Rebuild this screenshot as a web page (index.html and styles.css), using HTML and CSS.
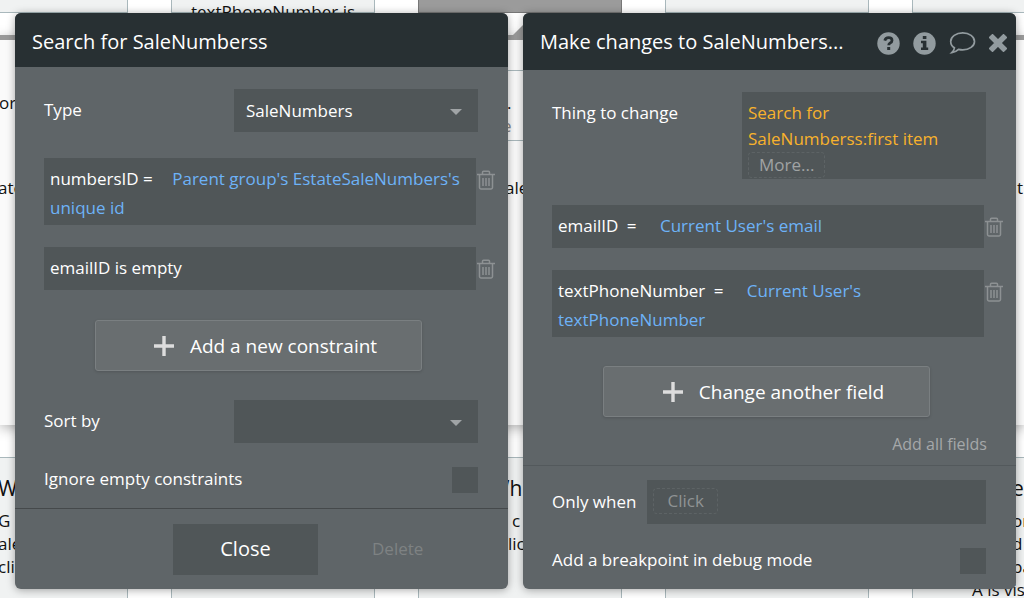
FILE: index.html
```html
<!DOCTYPE html>
<html lang="en">
<head>
  <meta charset="UTF-8" />
  <meta name="viewport" content="width=device-width, initial-scale=1.0" />
  <title>Workflow editor</title>
  <link rel="stylesheet" href="styles.css">
</head>
<body>
  <svg class="sprite" aria-hidden="true">
    <symbol id="trash" viewBox="0 0 18 20">
      <path d="M0 4.500h18M5.500 4V2.200q0-1 1-1h5q1 0 1 1V4M2.500 5v12.600q0 1.400 1.400 1.400h10.200q1.400 0 1.400-1.400V5M6 8v8M9 8v8M12 8v8" fill="none" stroke="currentColor" stroke-width="1.500" />
    </symbol>
    <symbol id="plus" viewBox="0 0 20 20">
      <path d="M10 0v20M0 10h20" stroke="currentColor" stroke-width="3.400" />
    </symbol>
  </svg>

  <div class="canvas">
    <div class="cards cards-top">
      <div class="card"></div>
      <div class="card"><p>textPhoneNumber is</p></div>
      <div class="card selected"></div>
      <div class="card"></div>
      <div class="card"></div>
    </div>
    <div class="workflow">
      <div class="pointer"></div>
      <div class="step"></div>
      <span class="note note-or">or</span>
      <span class="note note-dot">.</span>
      <span class="note note-e">e</span>
      <span class="note note-ate">ate</span>
      <span class="note note-sale">ale</span>
      <span class="note note-t">t</span>
    </div>
    <div class="cards cards-bottom">
      <div class="card first"><h2>W</h2><p>G</p><p>ale</p><p>cli</p></div>
      <div class="card"></div>
      <div class="card middle"><h2>Wh</h2><p>c</p><p>lic</p></div>
      <div class="card"></div>
      <div class="card last"><h2>e</h2><p>or</p><p>d</p><p>pa</p><p class="wide">A is vis</p></div>
    </div>
  </div>

  <main class="panels">
    <section class="panel">
      <header class="panel-header">
        <h1>Search for SaleNumberss</h1>
      </header>
      <div class="panel-body">
        <div class="row">
          <label for="type">Type</label>
          <span class="dropdown">
            <select id="type"><option>SaleNumbers</option></select>
          </span>
        </div>
        <div class="item">
          <div class="composer">numbersID = <span class="value">Parent group's EstateSaleNumbers's unique id</span></div>
          <button class="trash" aria-label="Delete constraint"><svg><use href="#trash" /></svg></button>
        </div>
        <div class="item">
          <div class="composer">emailID is empty</div>
          <button class="trash" aria-label="Delete constraint"><svg><use href="#trash" /></svg></button>
        </div>
        <button class="add-btn"><svg><use href="#plus" /></svg>Add a new constraint</button>
        <div class="row">
          <label for="sort">Sort by</label>
          <span class="dropdown">
            <select id="sort"><option></option></select>
          </span>
        </div>
        <div class="row check-row">
          <label for="ignore">Ignore empty constraints</label>
          <input type="checkbox" id="ignore">
        </div>
      </div>
      <footer class="panel-footer">
        <button class="close-btn">Close</button>
        <button class="delete-btn">Delete</button>
      </footer>
    </section>

    <section class="panel">
      <header class="panel-header action-header">
        <h1>Make changes to SaleNumbers...</h1>
        <div class="icons">
          <button aria-label="Help">
            <svg width="23" height="23" viewBox="0 0 23 23">
              <circle cx="11.5" cy="11.5" r="11.2" fill="currentColor" />
              <path d="M7.800 8.600Q8.500 5.600 11.600 5.600q3.400 0 3.400 2.800 0 1.700-1.900 2.600-1.400.7-1.400 2.200" fill="none" stroke="#283033" stroke-width="2.800" />
              <path d="M10.200 14.900h3v3h-3z" fill="#283033" />
            </svg>
          </button>
          <button aria-label="Info">
            <svg width="23" height="23" viewBox="0 0 23 23">
              <circle cx="11.5" cy="11.5" r="11.2" fill="currentColor" />
              <path d="M9.800 4h3.600v3H9.800zM8 8.800h5.400v6.800h1.800V18H8v-2.400h1.800v-4.400H8z" fill="#283033" />
            </svg>
          </button>
          <button aria-label="Comments">
            <svg width="27" height="24" viewBox="0 0 27 24">
              <path d="M13.700 1.900c6.600 0 11.800 3.800 11.800 8.500s-5.200 8.500-11.800 8.500c-1.500 0-2.900-.2-4.200-.5-1.800 1.800-4 3-6.700 3.300 1.500-1.400 2.400-2.800 2.600-4.900C3 15.200 1.700 13 1.700 10.400c0-4.700 5.400-8.500 12-8.500z" fill="none" stroke="currentColor" stroke-width="1.700" />
            </svg>
          </button>
          <button aria-label="Close">
            <svg width="18" height="18" viewBox="0 0 18 18">
              <path d="M3.500 3.500l11 11M14.500 3.500l-11 11" stroke="currentColor" stroke-width="5.500" stroke-linecap="square" />
            </svg>
          </button>
        </div>
      </header>
      <div class="panel-body">
        <div class="row thing-row">
          <span class="label">Thing to change</span>
          <div class="thing">
            Search for SaleNumberss:first item
            <button class="more">More...</button>
          </div>
        </div>
        <div class="item">
          <div class="composer">emailID <span class="equals">=</span> <span class="value">Current User's email</span></div>
          <button class="trash" aria-label="Delete field"><svg><use href="#trash" /></svg></button>
        </div>
        <div class="item">
          <div class="composer">textPhoneNumber <span class="equals">=</span> <span class="value">Current User's textPhoneNumber</span></div>
          <button class="trash" aria-label="Delete field"><svg><use href="#trash" /></svg></button>
        </div>
        <button class="add-btn change-btn"><svg><use href="#plus" /></svg>Change another field</button>
        <a class="all-fields" href="#">Add all fields</a>
      </div>
      <div class="conditions">
        <div class="row">
          <span class="label">Only when</span>
          <div class="condition"><button class="click">Click</button></div>
        </div>
        <div class="row check-row">
          <label for="breakpoint">Add a breakpoint in debug mode</label>
          <input type="checkbox" id="breakpoint">
        </div>
      </div>
    </section>
  </main>
</body>
</html>
```
FILE: styles.css
```css
* {
  box-sizing: border-box;
}

body {
  margin: 0;
  min-height: 100vh;
  position: relative;
  overflow: hidden;
  background: #fff;
  color: #fff;
  font-family: "Open Sans", "Noto Sans", sans-serif;
  font-size: 17px;
}

h1, h2, p {
  margin: 0;
  font-weight: normal;
}

button {
  padding: 0;
  border: none;
  background: none;
  color: inherit;
  font: inherit;
  cursor: pointer;
}

.sprite {
  display: none;
}

/* workflow canvas behind the panels */
.canvas {
  position: absolute;
  inset: 0;
  display: flex;
  flex-direction: column;
  overflow: hidden;
  color: #111;
  line-height: 23px;
}

.cards {
  display: flex;
  gap: 43px;
  margin-left: -76px;
}

.card {
  flex: none;
  width: 204px;
  border: 1px solid #a9b8bc;
  background: #f0f2f2;
  white-space: nowrap;
}

.cards-top {
  height: 13px;
}

.cards-top .card {
  border-top: none;
  text-align: center;
}

.card.selected {
  background: #9b9b9b;
  border-color: #777;
}

.workflow {
  position: relative;
  height: 393px;
  margin-top: 22px;
  border-top: 5px solid #999;
  background: #fafafa;
  box-shadow: 0 3px 12px rgba(0, 0, 0, 0.3);
}

.pointer {
  position: absolute;
  left: 512px;
  top: -18px;
  border: 14px solid transparent;
  border-top: none;
  border-bottom-color: #999;
}

.step {
  position: absolute;
  left: 419px;
  top: 30px;
  width: 204px;
  height: 71px;
  border: 1px solid #a9b8bc;
}

.note {
  position: absolute;
}

.note-or { left: -1px; top: 51px; }
.note-dot { left: 507px; top: 51px; }
.note-e { left: 502px; top: 74px; color: #888; }
.note-ate { left: -2px; top: 136px; }
.note-sale { left: 505px; top: 136px; }
.note-t { left: 1017px; top: 136px; }

.cards-bottom {
  flex: 1;
  margin-top: 32px;
  margin-bottom: -4px;
}

.cards-bottom .card {
  padding-top: 14px;
}

.cards-bottom h2 {
  font-size: 21px;
  line-height: 32px;
  margin-bottom: 5px;
}

.card.first {
  padding-left: 73px;
}

.card.middle {
  padding-left: 71px;
}

.card.middle p {
  padding-left: 18px;
}

.card.middle h2 + p {
  padding-left: 22px;
}

.card.last {
  padding-left: 99px;
}

.card.last .wide {
  margin-left: -40px;
}

/* floating property panels */
.panels {
  position: relative;
  display: grid;
  grid-template-columns: 1fr 1fr;
  gap: 15px;
  padding: 13px 8px 9px 15px;
}

.panel {
  display: flex;
  flex-direction: column;
  min-width: 0;
  border-radius: 6px;
  background: #5f6568;
  box-shadow: 0 1px 8px rgba(0, 0, 0, 0.35);
  overflow: hidden;
}

.panel-header {
  display: flex;
  align-items: center;
  justify-content: space-between;
  height: 54px;
  padding: 4px 9px 0 17px;
  background: #283033;
}

.action-header {
  height: 57px;
  padding-top: 1px;
}

.panel-header h1 {
  font-size: 20px;
  line-height: 28px;
}

.icons {
  display: flex;
  align-items: center;
  gap: 13px;
  padding-top: 2px;
  color: #929b9f;
}

.icons svg {
  display: block;
}

.panel-body {
  display: flex;
  flex-direction: column;
  padding: 22px 13px 0 29px;
}

.row {
  display: flex;
  align-items: center;
  justify-content: space-between;
  margin-right: 17px;
}

.row label,
.row .label {
  padding-bottom: 2px;
}

.dropdown {
  position: relative;
  width: 244px;
}

.dropdown::after {
  content: "";
  position: absolute;
  right: 16px;
  top: 20px;
  border: 6px solid transparent;
  border-top-color: #a0a4a6;
  border-bottom: none;
  pointer-events: none;
}

select {
  appearance: none;
  display: block;
  width: 100%;
  height: 43px;
  padding: 0 12px;
  border: none;
  border-radius: 0;
  background: #505658;
  color: #fff;
  font: inherit;
}

.item {
  display: flex;
  align-items: flex-start;
  gap: 1px;
  margin-bottom: 22px;
}

.row + .item {
  margin-top: 26px;
}

.composer {
  flex: 1;
  min-height: 43px;
  padding: 6px 6px 3px;
  background: #505658;
  line-height: 29px;
}

.value {
  margin-left: 15px;
  color: #6db2f7;
}

.equals {
  margin: 0 4px;
}

.trash {
  width: 18px;
  padding-top: 12px;
  color: #8d9193;
}

.trash svg {
  display: block;
  width: 18px;
  height: 20px;
}

.add-btn {
  display: flex;
  align-items: center;
  justify-content: center;
  gap: 16px;
  width: 327px;
  height: 51px;
  margin: 8px 0 29px 51px;
  padding-left: 14px;
  border: 1px solid #7a7f81;
  border-radius: 3px;
  background: #696e70;
  box-shadow: 0 1px 3px rgba(0, 0, 0, 0.15);
  font-size: 19px;
}

.add-btn svg {
  width: 20px;
  height: 20px;
  color: #ddd;
}

input[type="checkbox"] {
  appearance: none;
  width: 26px;
  height: 26px;
  margin: 0;
  background: #505658;
}

.check-row {
  align-items: flex-start;
  margin-top: 24px;
}

.panel-footer {
  display: flex;
  align-items: center;
  gap: 54px;
  margin-top: 15px;
  padding: 15px 84px 14px 158px;
  border-top: 1px solid #45494b;
}

.close-btn {
  width: 145px;
  height: 51px;
  padding-bottom: 2px;
  background: #505658;
  font-size: 20px;
}

.delete-btn {
  padding-bottom: 2px;
  color: #7e8283;
}

.thing-row {
  align-items: flex-start;
}

.thing-row .label {
  line-height: 42px;
}

.thing {
  width: 244px;
  padding: 8px 6px 1px;
  background: #505658;
  color: #f8b22c;
  line-height: 26px;
}

.more, .click {
  display: block;
  height: 26px;
  padding: 0 10px;
  border: 1px dashed #5d6365;
  border-radius: 4px;
  color: #a0a3a4;
  line-height: 24px;
}

.change-btn {
  margin-top: 7px;
  margin-bottom: 15px;
}

.all-fields {
  align-self: flex-end;
  margin-right: 16px;
  color: #a5a8aa;
  font-size: 16px;
  line-height: 25px;
  text-decoration: none;
}

.conditions {
  margin-top: 8px;
  padding: 14px 13px 14px 29px;
  border-top: 1px solid #53595c;
}

.condition {
  flex: 1;
  height: 44px;
  margin-left: 11px;
  padding: 8px 6px;
  background: #505658;
}

.click {
  padding: 0 13px;
  color: #8f9394;
}
```
